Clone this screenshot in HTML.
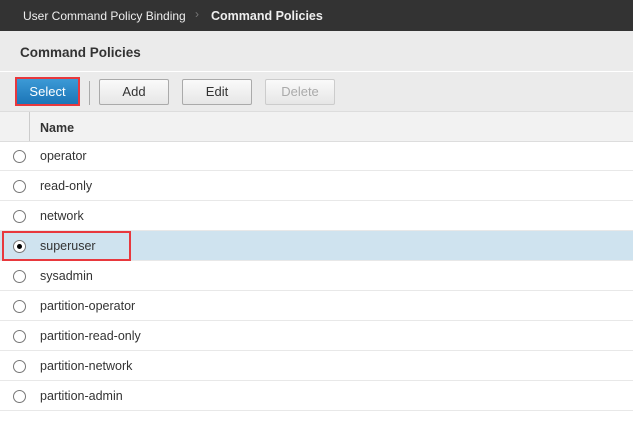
<!DOCTYPE html><html><head><style>
body{margin:0;width:633px;height:423px;background:#fff;font-family:"Liberation Sans",sans-serif;position:relative;overflow:hidden;font-size:12px;color:#333}
.a{position:absolute}
.top{left:0;top:0;width:633px;height:31px;background:#333;color:#eee;font-size:12px}
.pan{left:0;top:31px;width:633px;height:80px;background:#ebebeb}
.btn{height:24px;border:1px solid #aaa;border-radius:2px;background:linear-gradient(#fafafa,#e6e6e6);text-align:center;line-height:24px;font-size:13px}
.row{left:0;width:633px;height:29px;border-bottom:1px solid #e8e8e8}
.rad{position:absolute;left:13px;top:9px;width:11px;height:11px;border:1px solid #777;border-radius:50%;background:#fff}
.row span{position:absolute;left:40px;top:8px;font-size:12.5px}
</style></head><body>
<div class="a top"><span class="a" style="left:23px;top:9px">User Command Policy Binding</span><span class="a" style="left:195px;top:7px;color:#777">›</span><b class="a" style="left:211px;top:9px;font-size:12.5px">Command Policies</b></div>
<div class="a pan"><b class="a" style="left:20px;top:14px;font-size:13.5px;color:#333">Command Policies</b>
<div class="a" style="left:0;top:40px;width:633px;height:1px;background:#fff"></div></div>
<div class="a" style="left:15px;top:77px;width:65px;height:29px;border:2px solid #e8383d;box-sizing:border-box;background:linear-gradient(#3c9ad6,#1c75b7);color:#fff;text-align:center;line-height:25px;font-size:13px">Select</div>
<div class="a" style="left:89px;top:81px;width:1px;height:24px;background:#aaa"></div>
<div class="a btn" style="left:99px;top:79px;width:68px">Add</div>
<div class="a btn" style="left:182px;top:79px;width:68px">Edit</div>
<div class="a btn" style="left:265px;top:79px;width:68px;color:#aaa;border-color:#ccc">Delete</div>
<div class="a" style="left:0;top:111px;width:633px;height:29px;background:#f2f2f2;border-top:1px solid #ddd;border-bottom:1px solid #ddd"><div class="a" style="left:29px;top:0;width:1px;height:29px;background:#ccc"></div><b class="a" style="left:40px;top:9px;font-size:12.5px">Name</b></div>
<div class="a row" style="top:141px"><div class="rad"></div><span>operator</span></div>
<div class="a row" style="top:171px"><div class="rad"></div><span>read-only</span></div>
<div class="a row" style="top:201px"><div class="rad"></div><span>network</span></div>
<div class="a row" style="top:231px;background:#cfe3ef"><div class="rad"><div style="position:absolute;left:3px;top:3px;width:5px;height:5px;border-radius:50%;background:#000"></div></div><span>superuser</span></div>
<div class="a" style="left:2px;top:231px;width:129px;height:30px;border:2px solid #e8383d;box-sizing:border-box"></div>
<div class="a row" style="top:261px"><div class="rad"></div><span>sysadmin</span></div>
<div class="a row" style="top:291px"><div class="rad"></div><span>partition-operator</span></div>
<div class="a row" style="top:321px"><div class="rad"></div><span>partition-read-only</span></div>
<div class="a row" style="top:351px"><div class="rad"></div><span>partition-network</span></div>
<div class="a row" style="top:381px"><div class="rad"></div><span>partition-admin</span></div>
</body></html>
